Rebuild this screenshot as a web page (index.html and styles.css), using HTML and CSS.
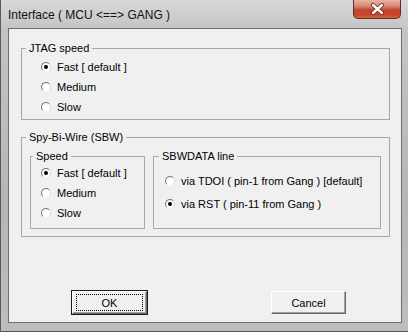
FILE: index.html
```html
<!DOCTYPE html>
<html lang="en">
<head>
    <meta charset="UTF-8">
    <title>Interface ( MCU &lt;==&gt; GANG )</title>
    <link rel="stylesheet" href="styles.css">
</head>
<body>
    <div class="window">
        <div class="titlebar">
            <span class="title">Interface ( MCU &lt;==&gt; GANG )</span>
            <div class="close-btn">
                <svg width="15" height="12" viewBox="0 0 15 12">
                    <path d="M3 2 L12 10 M12 2 L3 10" stroke="#6a2418" stroke-width="4" stroke-linecap="round"/>
                    <path d="M3 2 L12 10 M12 2 L3 10" stroke="#ffffff" stroke-width="2.4" stroke-linecap="round"/>
                </svg>
            </div>
        </div>
        <div class="client">
            <fieldset class="group jtag">
                <legend>JTAG speed</legend>
                <div class="row"><span class="radio checked"></span>Fast [ default ]</div>
                <div class="row"><span class="radio"></span>Medium</div>
                <div class="row"><span class="radio"></span>Slow</div>
            </fieldset>

            <fieldset class="group sbw">
                <legend>Spy-Bi-Wire (SBW)</legend>
                <div class="sbw-inner">
                    <fieldset class="group speed">
                        <legend>Speed</legend>
                        <div class="row"><span class="radio checked"></span>Fast [ default ]</div>
                        <div class="row"><span class="radio"></span>Medium</div>
                        <div class="row"><span class="radio"></span>Slow</div>
                    </fieldset>
                    <fieldset class="group sbwdata">
                        <legend>SBWDATA line</legend>
                        <div class="row"><span class="radio"></span>via TDOI ( pin-1 from Gang ) [default]</div>
                        <div class="row"><span class="radio checked"></span>via RST ( pin-11 from Gang )</div>
                    </fieldset>
                </div>
            </fieldset>

            <div class="buttons">
                <button class="btn default"><span class="focus">OK</span></button>
                <button class="btn">Cancel</button>
            </div>
        </div>
    </div>
</body>
</html>
```

FILE: styles.css
```css
body {
    margin: 0;
    background: #ffffff;
}
.window {
    position: relative;
    width: 408px;
    height: 332px;
    box-sizing: border-box;
    display: flex;
    flex-direction: column;
    padding: 0 6px 8px 7px;
    border-left: 1px solid #5a5a5a;
    border-bottom: 1px solid #5a5a5a;
    background: linear-gradient(to bottom, #d8d8d8 0px, #c4c4c4 30px, #b6b6b6 200px, #bdbdbd 332px);
    font-family: "Liberation Sans", Arial, sans-serif;
    font-size: 11px;
    line-height: 13px;
    color: #000;
}
.titlebar {
    height: 28px;
    display: flex;
    align-items: center;
}
.title {
    font-size: 12px;
    margin-top: 2px;
    color: #111;
}
.close-btn {
    position: absolute;
    top: 0;
    right: 7px;
    width: 46px;
    height: 18px;
    border: 1px solid #5c3028;
    border-top: none;
    border-radius: 0 0 5px 5px;
    background: linear-gradient(to bottom, #e9b3a6 0px, #d88a72 6px, #c1442c 10px, #c9452b 15px, #d8703e 19px);
    display: flex;
    align-items: center;
    justify-content: center;
}
.client {
    flex: 1;
    display: flex;
    flex-direction: column;
    background: #f0f0f0;
    border: 1px solid #6e6e6e;
    padding: 13px 11px 0 12px;
}
.group {
    margin: 0;
    border: 1px solid #a8a8a8;
    min-width: 0;
}
.group legend {
    padding: 0 3px;
}
.jtag {
    padding: 2px 11px 2px 19px;
}
.jtag legend {
    margin-left: -15px;
}
.sbw {
    margin-top: 11px;
    padding: 6px 8px 7px 8px;
}
.sbw legend {
    margin-left: -4px;
}
.sbw-inner {
    display: flex;
    gap: 8px;
}
.speed {
    width: 115px;
    box-sizing: border-box;
    padding: 0 4px 5px 10px;
}
.speed legend {
    margin-left: -8px;
}
.sbwdata {
    flex: 1;
    padding: 8px 4px 5px 11px;
    display: flex;
    flex-direction: column;
    gap: 3px;
}
.sbwdata legend {
    margin-left: -6px;
}
.row {
    height: 20px;
    display: flex;
    align-items: center;
    white-space: nowrap;
}
.radio {
    width: 8px;
    height: 8px;
    border-radius: 50%;
    border: 1px solid;
    border-color: #7a7a7a #d8d8d8 #f4f4f4 #7a7a7a;
    background: radial-gradient(circle at 60% 60%, #ffffff 40%, #e6e6e6 100%);
    margin-right: 6px;
    display: flex;
    align-items: center;
    justify-content: center;
    flex-shrink: 0;
}
.radio.checked::after {
    content: "";
    width: 4px;
    height: 4px;
    border-radius: 50%;
    background: #000;
}
.buttons {
    margin-top: auto;
    padding: 0 0 8px 51px;
    display: flex;
    gap: 124px;
}
.btn {
    width: 75px;
    height: 23px;
    padding: 0;
    font-family: "Liberation Sans", Arial, sans-serif;
    font-size: 11px;
    color: #000;
    background: #f0f0f0;
    border: 1px solid;
    border-color: #ffffff #696969 #696969 #ffffff;
    box-shadow: inset -1px -1px 0 #a0a0a0;
    display: flex;
    align-items: center;
    justify-content: center;
}
.btn.default {
    outline: 1px solid #1a1a1a;
    outline-offset: 0;
}
.focus {
    width: 65px;
    height: 15px;
    border: 1px dotted #000;
    display: flex;
    align-items: center;
    justify-content: center;
}
```
